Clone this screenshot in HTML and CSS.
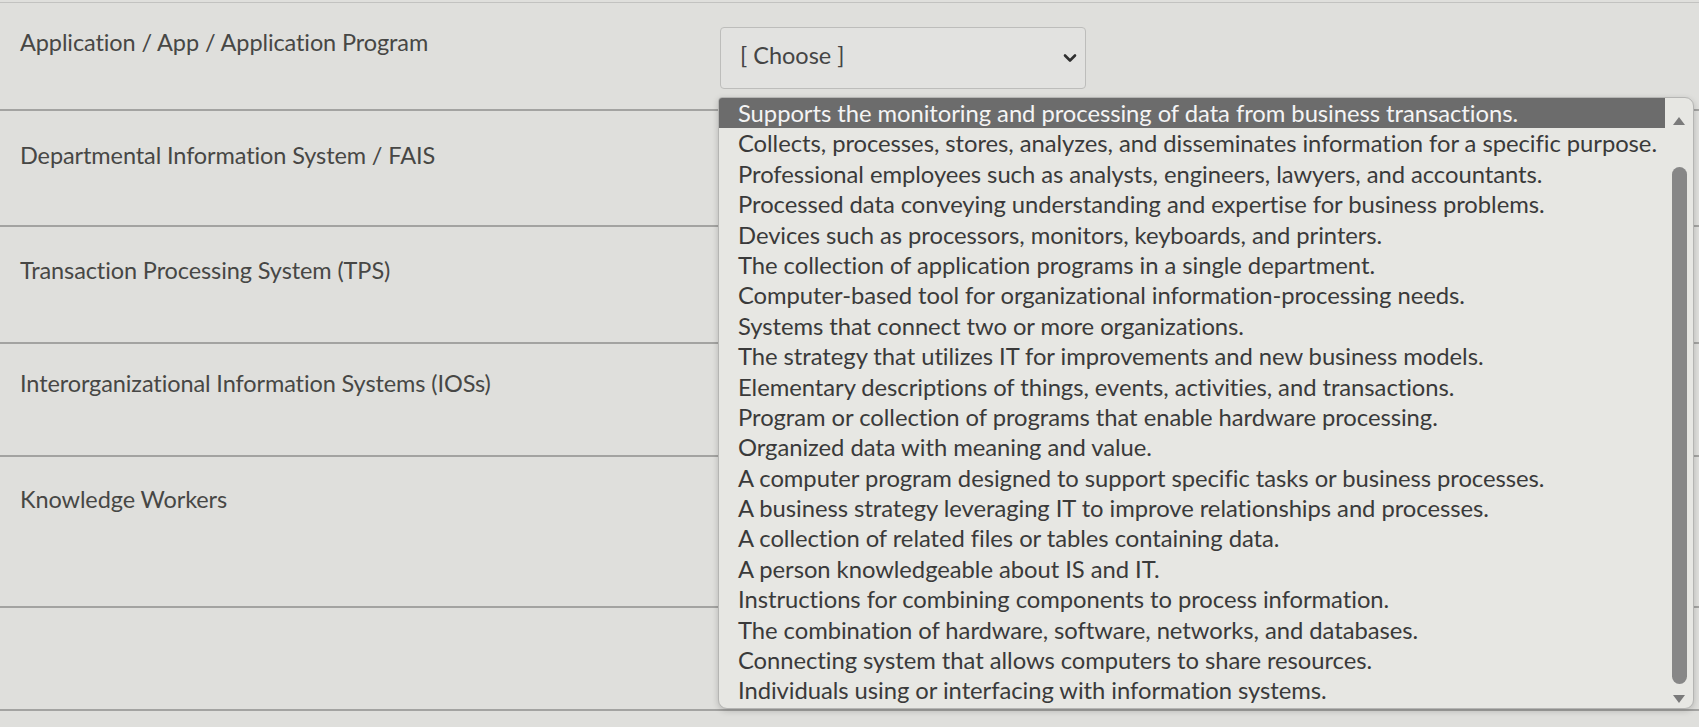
FILE: index.html
```html
<!DOCTYPE html>
<html lang="en">
<head>
<meta charset="utf-8">
<title>Matching</title>
<link rel="stylesheet" href="styles.css">
</head>
<body>
<div class="page">
  <div class="table">
    <div class="row row-1">
      <div class="label">Application / App / Application Program</div>
      <div class="answer">
        <div class="select">
          <span class="select-text">[ Choose ]</span>
          <svg class="chev" width="14" height="10" viewBox="0 0 14 10"><path d="M2 2.5 L7 7.5 L12 2.5" fill="none" stroke="#2f2f2f" stroke-width="2.6" stroke-linecap="round" stroke-linejoin="round"/></svg>
        </div>
      </div>
    </div>
    <div class="row row-2"><div class="label">Departmental Information System / FAIS</div></div>
    <div class="row row-3"><div class="label">Transaction Processing System (TPS)</div></div>
    <div class="row row-4"><div class="label">Interorganizational Information Systems (IOSs)</div></div>
    <div class="row row-5"><div class="label">Knowledge Workers</div></div>
    <div class="row row-6"></div>
  </div>

  <div class="dropdown">
    <ul class="options">
      <li class="option selected">Supports the monitoring and processing of data from business transactions.</li>
      <li class="option">Collects, processes, stores, analyzes, and disseminates information for a specific purpose.</li>
      <li class="option">Professional employees such as analysts, engineers, lawyers, and accountants.</li>
      <li class="option">Processed data conveying understanding and expertise for business problems.</li>
      <li class="option">Devices such as processors, monitors, keyboards, and printers.</li>
      <li class="option">The collection of application programs in a single department.</li>
      <li class="option">Computer-based tool for organizational information-processing needs.</li>
      <li class="option">Systems that connect two or more organizations.</li>
      <li class="option">The strategy that utilizes IT for improvements and new business models.</li>
      <li class="option">Elementary descriptions of things, events, activities, and transactions.</li>
      <li class="option">Program or collection of programs that enable hardware processing.</li>
      <li class="option">Organized data with meaning and value.</li>
      <li class="option">A computer program designed to support specific tasks or business processes.</li>
      <li class="option">A business strategy leveraging IT to improve relationships and processes.</li>
      <li class="option">A collection of related files or tables containing data.</li>
      <li class="option">A person knowledgeable about IS and IT.</li>
      <li class="option">Instructions for combining components to process information.</li>
      <li class="option">The combination of hardware, software, networks, and databases.</li>
      <li class="option">Connecting system that allows computers to share resources.</li>
      <li class="option">Individuals using or interfacing with information systems.</li>
    </ul>
    <div class="scrollbar">
      <svg class="arrow" width="14" height="10" viewBox="0 0 14 10"><path d="M7 1 L13 9 L1 9 Z" fill="#7a7a7a"/></svg>
      <div class="track"><div class="thumb"></div></div>
      <svg class="arrow" width="14" height="10" viewBox="0 0 14 10"><path d="M1 1 L13 1 L7 9 Z" fill="#7a7a7a"/></svg>
    </div>
  </div>
</div>
</body>
</html>
```

FILE: styles.css
```css
html, body {
  margin: 0;
  padding: 0;
}
body {
  background: #dfdfdc;
  font-family: Lato, "Open Sans", "Liberation Sans", sans-serif;
  color: #4a4a4a;
  width: 1699px;
  height: 727px;
  overflow: hidden;
}
.page {
  position: relative;
  width: 1699px;
  height: 727px;
}
.table {
  display: flex;
  flex-direction: column;
  border-top: 1px solid #c2c2c0;
  margin-top: 2px;
}
.row {
  display: flex;
  align-items: flex-start;
  border-bottom: 2px solid #a3a3a1;
  box-sizing: border-box;
}
.row-1 { height: 108px; }
.row-2 { height: 116px; }
.row-3 { height: 117px; }
.row-4 { height: 113px; }
.row-5 { height: 151px; }
.row-6 { height: 103px; }

.label {
  width: 700px;
  padding-left: 20px;
  font-size: 23.5px;
  line-height: 28px;
  color: #474745;
  letter-spacing: -0.1px;
}
.row-1 .label { padding-top: 25px; }
.row-2 .label { padding-top: 30px; }
.row-3 .label { padding-top: 29px; }
.row-4 .label { padding-top: 25px; }
.row-5 .label { padding-top: 28px; }

.answer {
  padding-top: 24px;
}
.select {
  width: 366px;
  height: 62px;
  box-sizing: border-box;
  border: 1px solid #bdbdbb;
  border-radius: 4px;
  background: #e2e2e0;
  display: flex;
  align-items: center;
  justify-content: space-between;
  padding: 0 8px 0 19px;
}
.select-text {
  font-size: 23.5px;
  color: #454545;
  padding-bottom: 6px;
}
.chev {
  display: block;
}

.dropdown {
  position: absolute;
  left: 718px;
  top: 95px;
  width: 976px;
  height: 612px;
  box-sizing: border-box;
  background: #e7e7e3;
  border: 1px solid #b5b5b3;
  border-radius: 4px 9px 9px 9px;
  box-shadow: 0 2px 6px rgba(0,0,0,0.18);
  display: flex;
  overflow: hidden;
}
.options {
  list-style: none;
  margin: 0;
  padding: 0;
  flex: 1;
}
.option {
  font-size: 23.8px;
  line-height: 30.4px;
  height: 30.4px;
  padding-left: 19px;
  color: #3a3a3a;
  white-space: nowrap;
  letter-spacing: -0.05px;
}
.option.selected {
  background: #6c6c6c;
  color: #f4f4f4;
}
.scrollbar {
  width: 28px;
  display: flex;
  flex-direction: column;
  align-items: center;
  padding: 18px 0 4px;
  box-sizing: border-box;
}
.scrollbar .arrow {
  display: block;
  flex: none;
}
.track {
  flex: 1;
  width: 100%;
  display: flex;
  justify-content: center;
  padding: 41px 0 10px;
  box-sizing: border-box;
}
.thumb {
  width: 15px;
  height: 100%;
  background: #878787;
  border-radius: 8px;
}
```
